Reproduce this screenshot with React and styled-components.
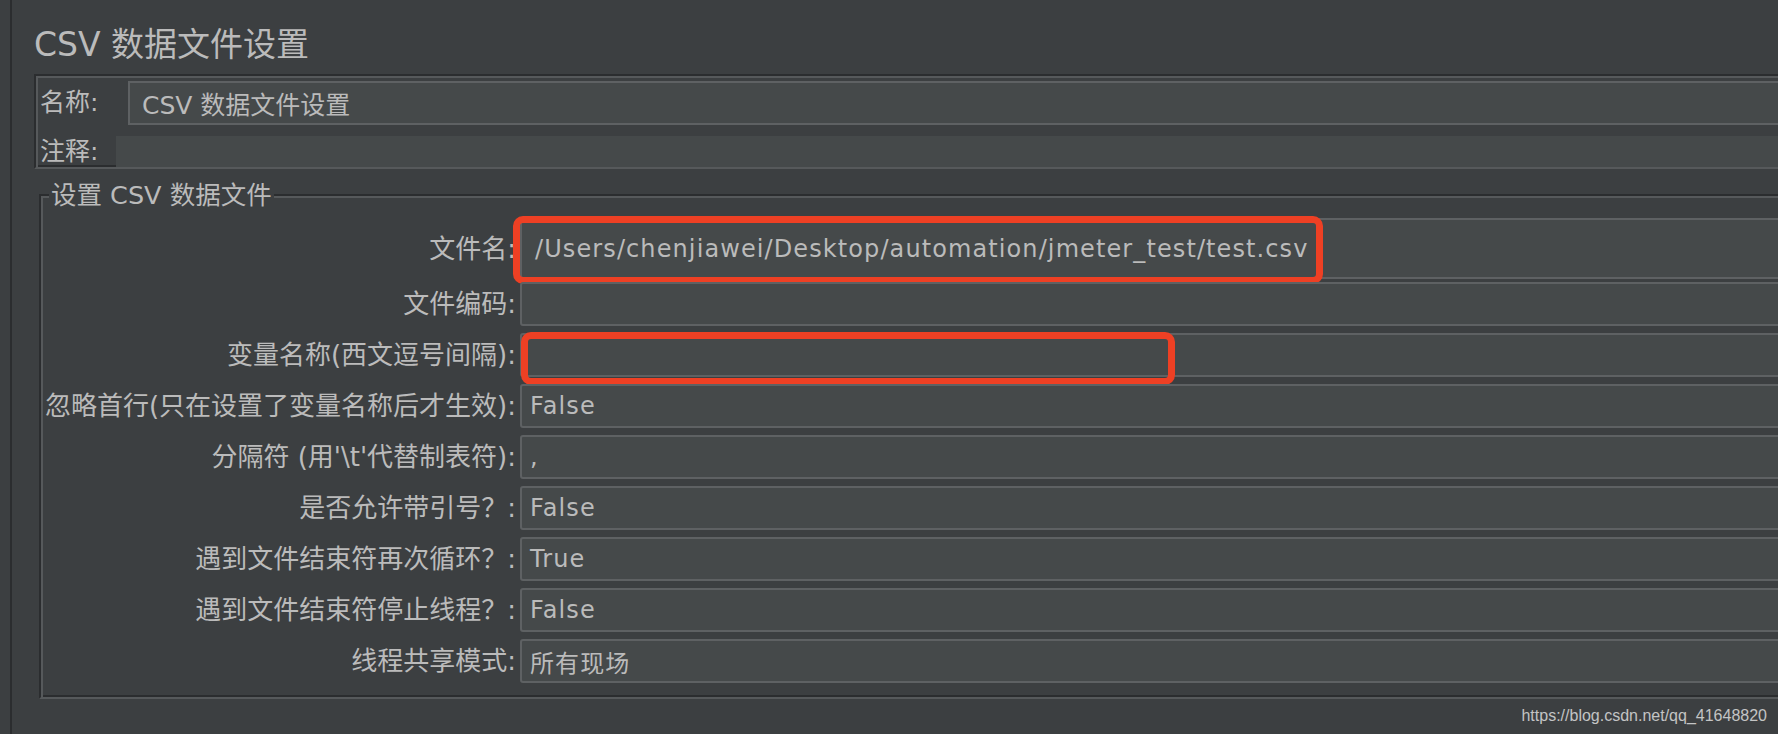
import React from 'react'
import styled, { createGlobalStyle } from 'styled-components'

const dark = '#2b2d2f'
const light = '#56595b'
const text = '#bbbbbb'

const GlobalStyle = createGlobalStyle`
  html, body {
    margin: 0;
    padding: 0;
    background: #3c3f41;
    overflow: hidden;
  }

  body {
    color: ${text};
    font-family: "DejaVu Sans", "Noto Sans CJK SC", sans-serif;
  }
`

const Page = styled.div`
  display: flex;
  height: 734px;
  position: relative;
  overflow: hidden;
`

const Gutter = styled.div`
  width: 10px;
  flex: none;
  border-right: 2px solid ${dark};
`

const Main = styled.main`
  flex: 1;
  min-width: 0;
  padding-left: 22px;
  margin-right: -60px;
`

const Title = styled.h1`
  font-size: 33px;
  font-weight: 400;
  line-height: 40px;
  margin: 25px 0 9px;
`

const etched = `
  border-style: solid;
  border-width: 2px;
  border-color: ${dark} ${light} ${light} ${dark};
  box-shadow: inset 2px 2px 0 ${light}, inset -2px -2px 0 ${dark};
`

const NamePanel = styled.section`
  ${etched}
  padding: 5px 0 0 4px;
  display: flex;
  flex-direction: column;
  gap: 11px;
`

const NameRow = styled.div`
  display: flex;
  align-items: center;
`

const NameLabel = styled.span`
  width: ${p => p.$width}px;
  flex: none;
  font-size: 25px;
  line-height: 30px;
`

const NameInput = styled.div`
  flex: 1;
  height: 44px;
  box-sizing: border-box;
  border: 2px solid #5e6163;
  background: #45494a;
  display: flex;
  align-items: center;
  padding-left: 12px;
  font-size: 25px;
`

const CommentInput = styled.div`
  flex: 1;
  height: 31px;
  background: #45494a;
`

const Group = styled.fieldset`
  ${etched}
  margin: 11px 0 0 5px;
  padding: 8px 0 7px;
  min-width: 0;
`

const Legend = styled.legend`
  margin-left: 8px;
  padding: 0 2px;
  font-size: 25.5px;
  line-height: 30px;
  background: #3c3f41;
`

const Row = styled.div`
  display: grid;
  grid-template-columns: 475px 1fr;
  column-gap: 4px;
  align-items: center;
  padding-bottom: ${p => (p.$tall ? 3 : 7)}px;
`

const Label = styled.label`
  text-align: right;
  font-size: 26px;
  line-height: 30px;
  white-space: nowrap;
`

const Field = styled.div`
  position: relative;
  height: ${p => (p.$tall ? 61 : 44)}px;
  box-sizing: border-box;
  border: 2px solid #5e6163;
  border-radius: 3px;
  background: #45494a;
  display: flex;
  align-items: center;
  padding-left: ${p => (p.$tall ? 13 : 8)}px;
  font-size: 24px;
  letter-spacing: 1.1px;
  white-space: nowrap;
`

const Mark = styled.div`
  position: absolute;
  left: ${p => p.$left}px;
  top: ${p => p.$top}px;
  width: ${p => p.$width}px;
  height: ${p => p.$height}px;
  box-sizing: border-box;
  border: 7px solid #ee4024;
  border-radius: 10px;
  pointer-events: none;
`

const Watermark = styled.div`
  position: absolute;
  right: 11px;
  bottom: 9px;
  font-family: "Liberation Sans", Arial, sans-serif;
  font-size: 16px;
  color: rgba(235, 235, 235, 0.78);
`

const rows = [
  {
    label: '文件名:',
    value: '/Users/chenjiawei/Desktop/automation/jmeter_test/test.csv',
    tall: true,
    mark: { left: -9, top: -4, width: 810, height: 68 }
  },
  { label: '文件编码:', value: '' },
  {
    label: '变量名称(西文逗号间隔):',
    value: '',
    mark: { left: -1, top: -3, width: 654, height: 53 }
  },
  { label: '忽略首行(只在设置了变量名称后才生效):', value: 'False' },
  { label: "分隔符 (用'\\t'代替制表符):", value: ',' },
  { label: '是否允许带引号？:', value: 'False' },
  { label: '遇到文件结束符再次循环？:', value: 'True' },
  { label: '遇到文件结束符停止线程？:', value: 'False' },
  { label: '线程共享模式:', value: '所有现场' }
]

export default function App() {
  return (
    <Page>
      <GlobalStyle />
      <Gutter />
      <Main>
        <Title>CSV 数据文件设置</Title>
        <NamePanel>
          <NameRow>
            <NameLabel $width={88}>名称:</NameLabel>
            <NameInput>CSV 数据文件设置</NameInput>
          </NameRow>
          <NameRow>
            <NameLabel $width={76}>注释:</NameLabel>
            <CommentInput />
          </NameRow>
        </NamePanel>
        <Group>
          <Legend>设置 CSV 数据文件</Legend>
          {rows.map(row => (
            <Row key={row.label} $tall={row.tall}>
              <Label>{row.label}</Label>
              <Field $tall={row.tall}>
                {row.value}
                {row.mark && (
                  <Mark
                    $left={row.mark.left}
                    $top={row.mark.top}
                    $width={row.mark.width}
                    $height={row.mark.height}
                  />
                )}
              </Field>
            </Row>
          ))}
        </Group>
      </Main>
      <Watermark>https://blog.csdn.net/qq_41648820</Watermark>
    </Page>
  )
}
